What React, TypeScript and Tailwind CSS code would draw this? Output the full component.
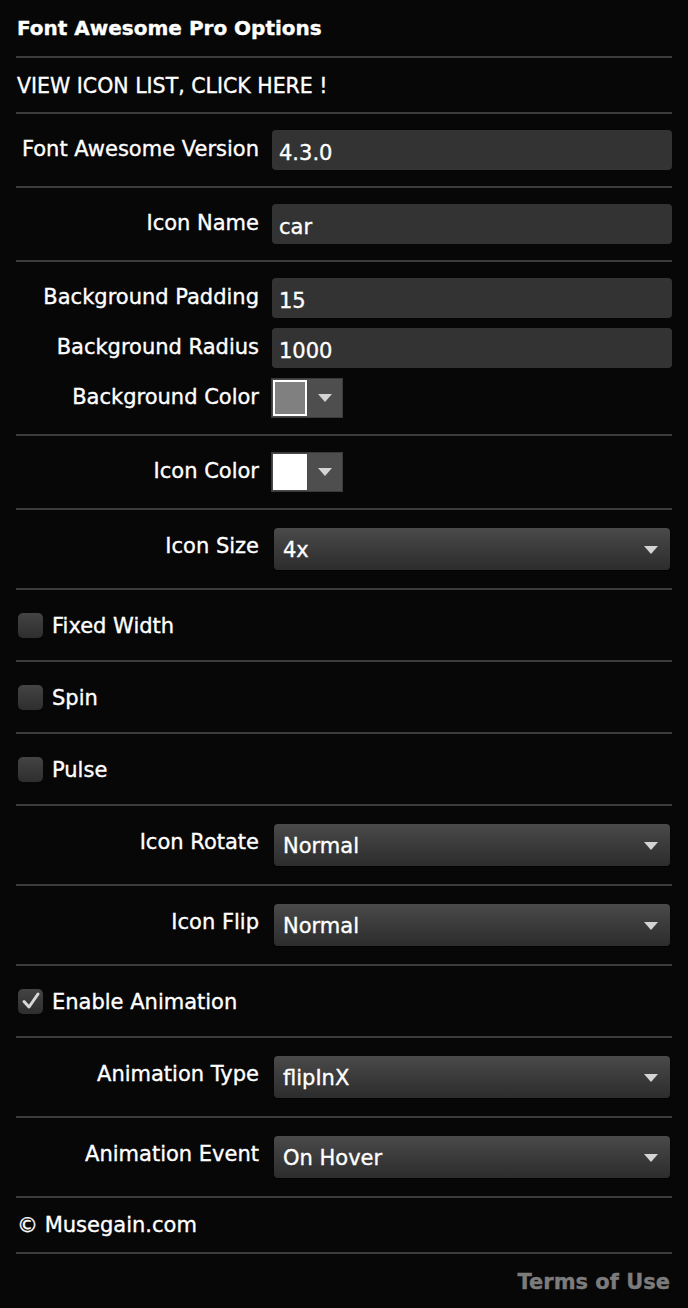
import React from "react"

const FONT = { fontFamily: '"DejaVu Sans", "Lucida Grande", Verdana, sans-serif' }

function Caret() {
  return (
    <svg width="14" height="8" viewBox="0 0 14 8" className="shrink-0">
      <path d="M0 0 H14 L7 8 Z" fill="#d4d4d4" />
    </svg>
  )
}

function Label({ children, raised }: { children: React.ReactNode; raised?: boolean }) {
  return (
    <div className={`w-[244px] shrink-0 text-right pr-[1px] whitespace-nowrap ${raised ? "pb-[6px]" : "pb-[1px]"}`}>
      {children}
    </div>
  )
}

function TextInput({ value }: { value: string }) {
  return (
    <div className="h-[40px] flex-1 rounded-[4px] bg-[#333333] pl-[7px] pt-[6px] flex items-center">
      {value}
    </div>
  )
}

function Select({ value }: { value: string }) {
  return (
    <div className="mx-[2px] h-[42px] flex-1 rounded-[4px] bg-gradient-to-b from-[#4a4a4a] to-[#2c2c2c] shadow-[0_1px_1px_rgba(0,0,0,0.6)] flex items-center justify-between pl-[9px] pr-[12px] pt-[2px]">
      <span>{value}</span>
      <Caret />
    </div>
  )
}

function ColorPicker({ color }: { color: string }) {
  return (
    <div className="h-[40px] w-[72px] bg-[#3a3a3a] p-[1px] flex">
      <div className="h-full w-[36px] bg-[#4a4a4a] p-[1px]">
        <div className="h-full w-full border-2 border-white" style={{ backgroundColor: color }} />
      </div>
      <div className="h-full flex-1 bg-[#4e4e4e] flex items-center justify-center">
        <Caret />
      </div>
    </div>
  )
}

function Checkbox({ checked }: { checked?: boolean }) {
  return (
    <div className="w-[25px] h-[25px] shrink-0 rounded-[5px] bg-gradient-to-b from-[#444444] to-[#2e2e2e] flex items-center justify-center">
      {checked && (
        <svg width="20" height="20" viewBox="0 0 20 20">
          <path d="M3 10.5 L8 16 L17 3" fill="none" stroke="#d8d8d8" strokeWidth="3" strokeLinecap="round" strokeLinejoin="round" />
        </svg>
      )}
    </div>
  )
}

const DIV = "border-b-2 border-[#3b3b3b]"

function InputRow({ label, children, tall }: { label: string; children: React.ReactNode; tall?: boolean }) {
  return (
    <div className={`${DIV} flex items-center gap-[12px] ${tall ? "h-[80px]" : "h-[74px]"}`}>
      <Label raised={tall}>{label}</Label>
      {children}
    </div>
  )
}

function CheckRow({ label, checked }: { label: string; checked?: boolean }) {
  return (
    <div className={`${DIV} h-[72px] flex items-center gap-[9px] pl-[2px]`}>
      <Checkbox checked={checked} />
      <span className="pt-[2px]">{label}</span>
    </div>
  )
}

export default function App() {
  return (
    <div
      className="min-h-[1308px] bg-[#070707] text-white text-[21px] leading-none [-webkit-text-stroke:0.35px_currentColor]"
      style={FONT}
    >
      <div className="mx-4">
        <div className={`${DIV} h-[58px] flex items-center pl-[1px] font-bold text-[20px]`}>Font Awesome Pro Options</div>
        <div className={`${DIV} h-[56px] flex items-center pl-[1px] pt-[2px] text-[20.5px]`}>VIEW ICON LIST, CLICK HERE !</div>

        <InputRow label="Font Awesome Version">
          <TextInput value="4.3.0" />
        </InputRow>
        <InputRow label="Icon Name">
          <TextInput value="car" />
        </InputRow>

        <div className={`${DIV} h-[174px] flex flex-col justify-center gap-[10px]`}>
          <div className="flex items-center gap-[12px]">
            <Label>Background Padding</Label>
            <TextInput value="15" />
          </div>
          <div className="flex items-center gap-[12px]">
            <Label>Background Radius</Label>
            <TextInput value="1000" />
          </div>
          <div className="flex items-center gap-[11px]">
            <Label>Background Color</Label>
            <ColorPicker color="#808080" />
          </div>
        </div>

        <div className={`${DIV} h-[74px] flex items-center gap-[11px]`}>
          <Label>Icon Color</Label>
          <ColorPicker color="#ffffff" />
        </div>

        <InputRow label="Icon Size" tall>
          <Select value="4x" />
        </InputRow>

        <CheckRow label="Fixed Width" />
        <CheckRow label="Spin" />
        <CheckRow label="Pulse" />

        <InputRow label="Icon Rotate" tall>
          <Select value="Normal" />
        </InputRow>
        <InputRow label="Icon Flip" tall>
          <Select value="Normal" />
        </InputRow>

        <CheckRow label="Enable Animation" checked />

        <InputRow label="Animation Type" tall>
          <Select value="flipInX" />
        </InputRow>
        <InputRow label="Animation Event" tall>
          <Select value="On Hover" />
        </InputRow>

        <div className={`${DIV} h-[56px] flex items-center pl-[1px]`}>© Musegain.com</div>
        <div className="h-[56px] flex items-center justify-end pr-[2px] font-bold text-[#7c7c7c]">Terms of Use</div>
      </div>
    </div>
  )
}
